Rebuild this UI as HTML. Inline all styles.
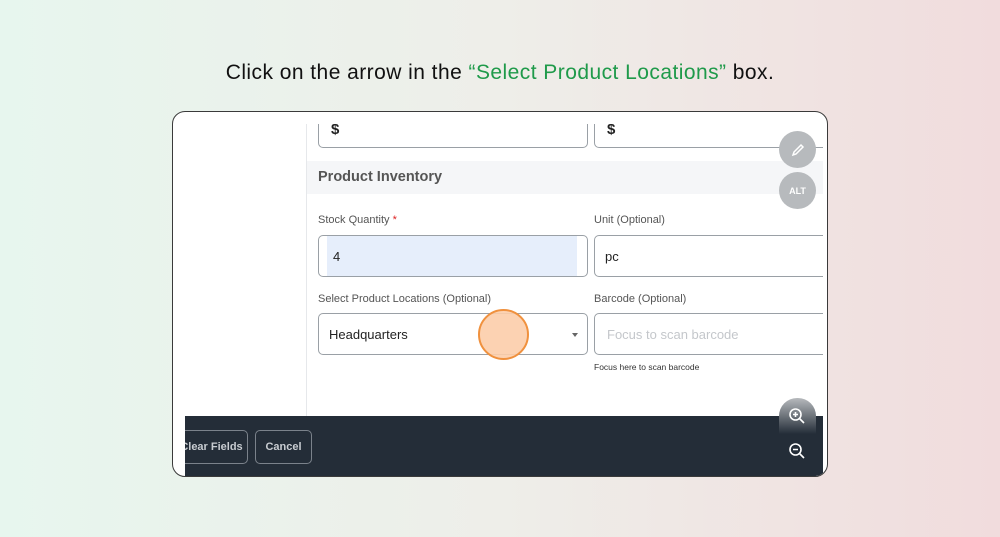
<!DOCTYPE html>
<html><head><meta charset="utf-8"><style>
*{box-sizing:border-box;margin:0;padding:0}
body{width:1000px;height:537px;overflow:hidden;font-family:"Liberation Sans",sans-serif;background:linear-gradient(90deg,#e7f6ee 0%,#eeeee9 50%,#f1dcdd 100%);position:relative}
.title{position:absolute;top:61px;left:0;width:1000px;text-align:center;font-size:21px;letter-spacing:0.45px;color:#111}
.title span{color:#1f9a4a}
.frame{position:absolute;left:172px;top:111px;width:656px;height:366px;border:1.5px solid #3a3a3a;border-radius:13px;background:#fff;overflow:hidden}
.inner{position:absolute;left:12px;top:12px;width:638px;height:356px;background:#fff;overflow:hidden}
.card{position:absolute;left:121px;top:-5px;width:530px;height:303px;background:#fff;border:1px solid #e6e8eb;border-radius:4px}
.inp{position:absolute;border:1px solid #9aa0a6;border-radius:5px;background:#fff;font-size:13px;color:#222;display:flex;align-items:center}
.lbl{position:absolute;font-size:11px;color:#555}
.sec{position:absolute;left:0;top:41px;width:530px;height:33px;background:#f5f6f8}
.bar{position:absolute;left:0;top:292px;width:638px;height:70px;background:#242d38}
.btn{position:absolute;top:306px;height:34px;border:1px solid #7b828b;border-radius:5px;color:#c8ccd1;font-size:11px;font-weight:bold;display:flex;align-items:center;justify-content:center}
.fab{position:absolute;width:37px;height:37px;border-radius:50%;background:#b7babd;color:#fff;display:flex;align-items:center;justify-content:center;font-size:9px;font-weight:bold}
</style></head><body>
<div class="title">Click on the arrow in the <span>“Select Product Locations”</span> box.</div>
<div class="frame"><div class="inner">
 <div class="card">
  <div class="inp" style="left:11px;top:-10px;width:270px;height:38px;padding-left:12px;font-weight:bold;font-size:15px">$</div>
  <div class="inp" style="left:287px;top:-10px;width:260px;height:38px;padding-left:12px;font-weight:bold;font-size:15px">$</div>
  <div class="sec"></div>
  <div style="position:absolute;left:11px;top:49px;font-size:14.5px;color:#555;font-weight:bold">Product Inventory</div>
  <div class="lbl" style="left:11px;top:94px">Stock Quantity <span style="color:#d22">*</span></div>
  <div class="lbl" style="left:287px;top:94px">Unit (Optional)</div>
  <div class="inp" style="left:11px;top:115px;width:270px;height:42px;padding-left:0;overflow:hidden"><div style="margin-left:8px;width:250px;height:100%;background:#e6eefb;display:flex;align-items:center;padding-left:6px">4</div></div>
  <div class="inp" style="left:287px;top:115px;width:260px;height:42px;padding-left:10px">pc</div>
  <div class="lbl" style="left:11px;top:173px">Select Product Locations (Optional)</div>
  <div class="lbl" style="left:287px;top:173px">Barcode (Optional)</div>
  <div class="inp" style="left:11px;top:193px;width:270px;height:42px;padding-left:10px">Headquarters
   <div style="position:absolute;right:9px;top:19px;width:0;height:0;border-left:3.5px solid transparent;border-right:3.5px solid transparent;border-top:4px solid #666"></div></div>
  <div class="inp" style="left:287px;top:193px;width:260px;height:42px;padding-left:12px;color:#c4c7cb">Focus to scan barcode</div>
  <div style="position:absolute;left:287px;top:242px;font-size:8.5px;color:#333">Focus here to scan barcode</div>
  <div style="position:absolute;left:171px;top:189px;width:51px;height:51px;border-radius:50%;background:rgba(252,205,170,.9);border:2px solid #f0913e"></div>
 </div>
 <div class="bar"></div>
 <div class="btn" style="left:-10px;width:73px">Clear Fields</div>
 <div class="btn" style="left:70px;width:57px">Cancel</div>
 <div class="fab" style="left:594px;top:7px"><svg width="16" height="16" viewBox="0 0 16 16" fill="none" stroke="#fff" stroke-width="1.5"><path d="M3 13l1-3 7-7 2 2-7 7z"/></svg></div>
 <div class="fab" style="left:594px;top:48px">ALT</div>
 <div style="position:absolute;left:594px;top:274px;width:37px;height:80px;border-radius:18px 18px 0 0;background:linear-gradient(#b7babd,#242d38 45%)"></div>
 <svg style="position:absolute;left:603px;top:283px" width="18" height="18" viewBox="0 0 18 18" fill="none" stroke="#fff" stroke-width="1.6"><circle cx="7.5" cy="7.5" r="5.5"/><path d="M11.5 11.5l4.5 4.5M5 7.5h5M7.5 5v5"/></svg>
 <svg style="position:absolute;left:603px;top:318px" width="18" height="18" viewBox="0 0 18 18" fill="none" stroke="#fff" stroke-width="1.6"><circle cx="7.5" cy="7.5" r="5.5"/><path d="M11.5 11.5l4.5 4.5M5 7.5h5"/></svg>
</div></div>
</body></html>
